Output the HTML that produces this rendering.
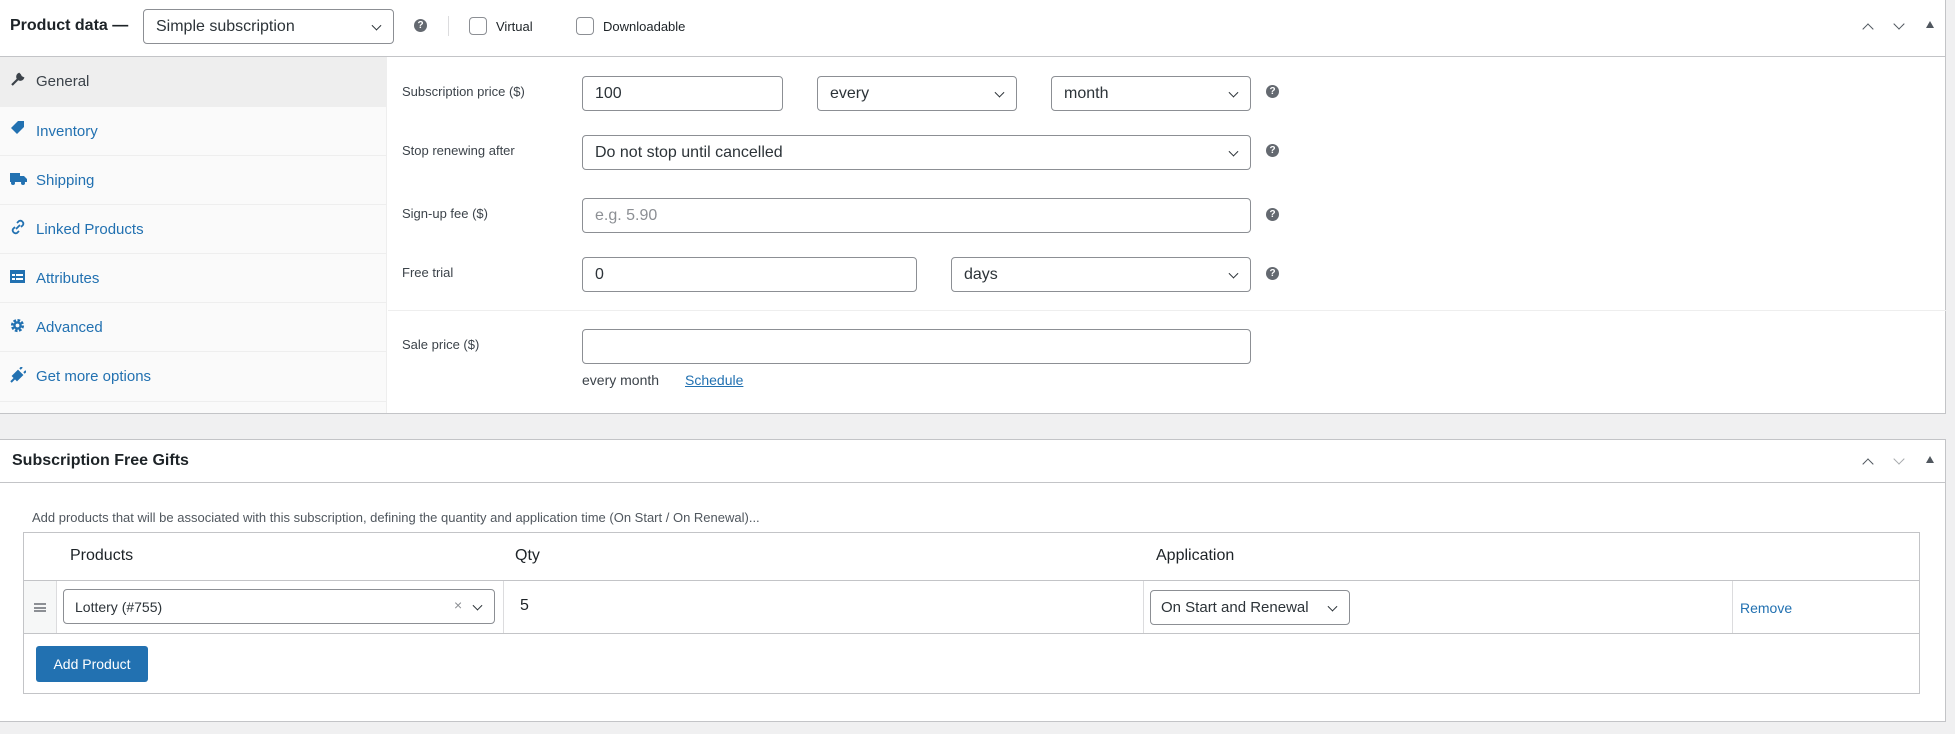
<!DOCTYPE html>
<html><head><meta charset="utf-8"><style>
*{box-sizing:border-box;margin:0;padding:0}
body{width:1955px;height:734px;background:#f0f0f1;font-family:"Liberation Sans",sans-serif;color:#1d2327;position:relative;overflow:hidden}
.a{position:absolute}
.panel{position:absolute;left:0;width:1946px;background:#fff;border:1px solid #c3c4c7;border-left:none}
.inp{position:absolute;border:1px solid #8c8f94;border-radius:4px;background:#fff;font-size:16px;color:#2c3338;padding-left:12px;display:flex;align-items:center}
.sel::after{content:"";position:absolute;right:13px;top:50%;width:6px;height:6px;border-right:1.5px solid #2c3338;border-bottom:1.5px solid #2c3338;transform:translateY(-70%) rotate(45deg)}
.lbl{position:absolute;left:402px;font-size:13px;color:#3c434a}
.help{position:absolute;width:13px;height:13px;border-radius:50%;background:#646970;color:#fff;font-size:10px;font-weight:bold;text-align:center;line-height:13px}
.side{position:absolute;left:0;width:387px;height:49px;border-bottom:1px solid #eee;font-size:15px;color:#2271b1;display:flex;align-items:center;padding-left:36px}
.arr{position:absolute;width:8px;height:8px;border-left:1.5px solid #50575e;border-top:1.5px solid #50575e}
</style></head><body>

<div class="panel" style="top:0;height:414px;border-top:none"></div>
<div class="a" style="left:0;top:56px;width:1946px;height:1px;background:#c3c4c7"></div>
<div class="a" style="left:10px;top:17px;font-size:16px;font-weight:bold">Product data —</div>
<div class="inp sel" style="left:143px;top:9px;width:251px;height:35px">Simple subscription</div>
<div class="help" style="left:414px;top:19px">?</div>
<div class="a" style="left:448px;top:16px;width:1px;height:20px;background:#dcdcde"></div>
<div class="a" style="left:469px;top:17px;width:18px;height:18px;border:1px solid #8c8f94;border-radius:4px"></div>
<div class="a" style="left:496px;top:19px;font-size:13px">Virtual</div>
<div class="a" style="left:576px;top:17px;width:18px;height:18px;border:1px solid #8c8f94;border-radius:4px"></div>
<div class="a" style="left:603px;top:19px;font-size:13px">Downloadable</div>
<div class="arr" style="left:1864px;top:25px;transform:rotate(45deg)"></div>
<div class="arr" style="left:1895px;top:20px;transform:rotate(225deg)"></div>
<div class="a" style="left:1926px;top:21px;width:0;height:0;border-left:4px solid transparent;border-right:4px solid transparent;border-bottom:7px solid #50575e"></div>

<div class="a" style="left:0;top:57px;width:387px;height:356px;background:#fafafa;border-right:1px solid #eee"></div>
<div class="side" style="top:57px;height:50px;background:#eee;color:#3c434a">General</div>
<div class="side" style="top:107px">Inventory</div>
<div class="side" style="top:156px">Shipping</div>
<div class="side" style="top:205px">Linked Products</div>
<div class="side" style="top:254px">Attributes</div>
<div class="side" style="top:303px">Advanced</div>
<div class="side" style="top:352px;height:50px">Get more options</div>
<svg class="a" style="left:10px;top:71px" width="16" height="16" viewBox="0 0 16 16"><path d="M2 14l6-6M9 3a3 3 0 104 4l-2-1-1-2z" stroke="#3c434a" stroke-width="2.2" fill="#3c434a"/></svg>
<svg class="a" style="left:10px;top:120px" width="16" height="16" viewBox="0 0 16 16"><path d="M8 1h6v6l-7 7-6-6z" fill="#2271b1"/></svg>
<svg class="a" style="left:10px;top:172px" width="17" height="14" viewBox="0 0 17 14"><path d="M0 1h10v9H0zM10 4h4l3 3v3h-7z" fill="#2271b1"/><circle cx="3" cy="11" r="2" fill="#2271b1"/><circle cx="13" cy="11" r="2" fill="#2271b1"/></svg>
<svg class="a" style="left:10px;top:219px" width="16" height="16" viewBox="0 0 16 16"><path d="M6 10l4-4M7 4l2-2a3 3 0 014 4l-2 2M9 12l-2 2a3 3 0 01-4-4l2-2" stroke="#2271b1" stroke-width="1.8" fill="none"/></svg>
<svg class="a" style="left:10px;top:270px" width="15" height="13" viewBox="0 0 15 13"><rect x="0" y="0" width="15" height="13" fill="#2271b1"/><rect x="2" y="4" width="3" height="2" fill="#fff"/><rect x="6" y="4" width="7" height="2" fill="#fff"/><rect x="2" y="8" width="3" height="2" fill="#fff"/><rect x="6" y="8" width="7" height="2" fill="#fff"/></svg>
<svg class="a" style="left:10px;top:318px" width="15" height="15" viewBox="0 0 16 16"><circle cx="8" cy="8" r="5" fill="none" stroke="#2271b1" stroke-width="4" stroke-dasharray="2.5 1.4"/><circle cx="8" cy="8" r="4.5" fill="#2271b1"/><circle cx="8" cy="8" r="2" fill="#fafafa"/></svg>
<svg class="a" style="left:10px;top:367px" width="16" height="16" viewBox="0 0 16 16"><path d="M1 15l4-4 -2-2 5-5 4 4-5 5-2-2M10 2l2-2M14 6l2-2" stroke="#2271b1" stroke-width="2" fill="#2271b1"/></svg>

<div class="lbl" style="top:84px">Subscription price ($)</div>
<div class="inp" style="left:582px;top:76px;width:201px;height:35px">100</div>
<div class="inp sel" style="left:817px;top:76px;width:200px;height:35px">every</div>
<div class="inp sel" style="left:1051px;top:76px;width:200px;height:35px">month</div>
<div class="help" style="left:1266px;top:85px">?</div>

<div class="lbl" style="top:143px">Stop renewing after</div>
<div class="inp sel" style="left:582px;top:135px;width:669px;height:35px">Do not stop until cancelled</div>
<div class="help" style="left:1266px;top:144px">?</div>

<div class="lbl" style="top:206px">Sign-up fee ($)</div>
<div class="inp" style="left:582px;top:198px;width:669px;height:35px;color:#8c8f94">e.g. 5.90</div>
<div class="help" style="left:1266px;top:208px">?</div>

<div class="lbl" style="top:265px">Free trial</div>
<div class="inp" style="left:582px;top:257px;width:335px;height:35px">0</div>
<div class="inp sel" style="left:951px;top:257px;width:300px;height:35px">days</div>
<div class="help" style="left:1266px;top:267px">?</div>

<div class="a" style="left:388px;top:310px;width:1558px;height:1px;background:#eee"></div>
<div class="lbl" style="top:337px">Sale price ($)</div>
<div class="inp" style="left:582px;top:329px;width:669px;height:35px"></div>
<div class="a" style="left:582px;top:372px;font-size:14px;color:#3c434a">every month</div>
<div class="a" style="left:685px;top:372px;font-size:14px;color:#2271b1;text-decoration:underline">Schedule</div>

<div class="panel" style="top:439px;height:283px"></div>
<div class="a" style="left:0;top:482px;width:1946px;height:1px;background:#c3c4c7"></div>
<div class="a" style="left:12px;top:452px;font-size:16px;font-weight:bold">Subscription Free Gifts</div>
<div class="arr" style="left:1864px;top:460px;transform:rotate(45deg)"></div>
<div class="arr" style="left:1895px;top:455px;transform:rotate(225deg);border-color:#a7aaad"></div>
<div class="a" style="left:1926px;top:456px;width:0;height:0;border-left:4px solid transparent;border-right:4px solid transparent;border-bottom:7px solid #50575e"></div>
<div class="a" style="left:32px;top:510px;font-size:13px;color:#50575e">Add products that will be associated with this subscription, defining the quantity and application time (On Start / On Renewal)...</div>

<div class="a" style="left:23px;top:532px;width:1897px;height:162px;border:1px solid #c3c4c7"></div>
<div class="a" style="left:23px;top:580px;width:1897px;height:1px;background:#c3c4c7"></div>
<div class="a" style="left:23px;top:633px;width:1897px;height:1px;background:#c3c4c7"></div>
<div class="a" style="left:24px;top:581px;width:33px;height:52px;background:#f6f7f7;border-right:1px solid #dcdcde"></div>
<div class="a" style="left:503px;top:581px;width:1px;height:52px;background:#dcdcde"></div>
<div class="a" style="left:1143px;top:581px;width:1px;height:52px;background:#dcdcde"></div>
<div class="a" style="left:1732px;top:581px;width:1px;height:52px;background:#dcdcde"></div>
<div class="a" style="left:70px;top:547px;font-size:16px">Products</div>
<div class="a" style="left:515px;top:547px;font-size:16px">Qty</div>
<div class="a" style="left:1156px;top:547px;font-size:16px">Application</div>
<div class="a" style="left:34px;top:603px;width:12px;height:9px;border-top:2px solid #8c8f94;border-bottom:2px solid #8c8f94"></div>
<div class="a" style="left:34px;top:607px;width:12px;height:2px;background:#8c8f94"></div>
<div class="inp sel" style="left:63px;top:589px;width:432px;height:35px;font-size:14px;padding-left:11px">Lottery (#755)</div>
<div class="a" style="left:454px;top:597px;font-size:14px;color:#8c8f94">×</div>
<div class="a" style="left:520px;top:597px;font-size:16px">5</div>
<div class="inp sel" style="left:1150px;top:590px;width:200px;height:35px;font-size:15px;padding-left:10px;padding-right:26px;white-space:nowrap">On Start and Renewal</div>
<div class="a" style="left:1740px;top:600px;font-size:14px;color:#2271b1">Remove</div>
<div class="a" style="left:36px;top:646px;width:112px;height:36px;background:#2271b1;border-radius:3px;color:#fff;font-size:14px;display:flex;align-items:center;justify-content:center">Add Product</div>
</body></html>
